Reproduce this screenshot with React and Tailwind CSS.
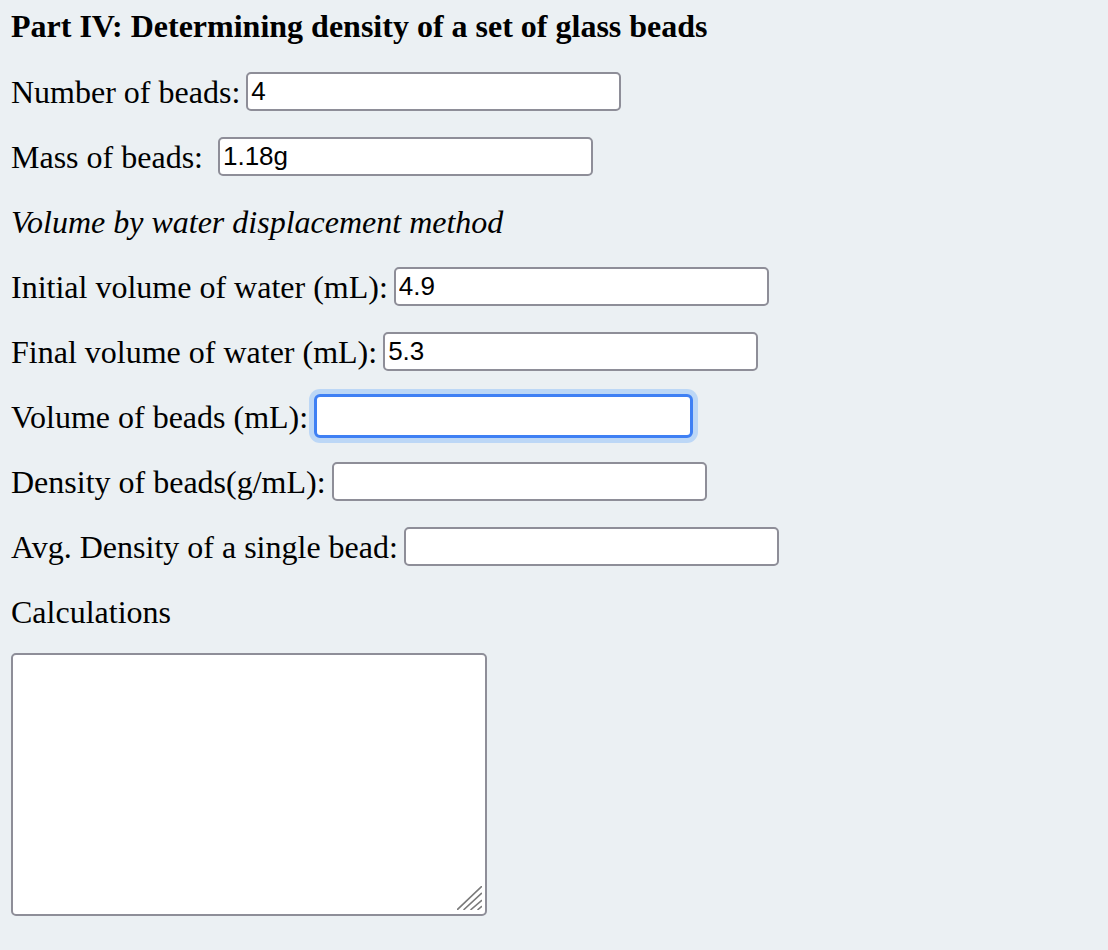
import React from "react";

function Field({ label, value, gap = "ml-[6px]" }) {
  return (
    <div className="h-[39px] mt-[26px] flex items-center">
      <span className="whitespace-pre pt-[1px]">{label}</span>
      <input
        readOnly
        defaultValue={value}
        className={`${gap} w-[375px] h-[39px] border-2 border-[#8e8e98] rounded-[5px] bg-white px-[3px] text-[26px] text-black font-['Liberation_Sans',Arial,sans-serif] outline-none`}
      />
    </div>
  );
}

export default function App() {
  return (
    <div className="min-h-[950px] bg-[#ebf0f3] pl-[11px] pt-[7px] font-['Liberation_Serif','Times_New_Roman',serif] text-[32px] leading-[37px] text-black">
      <div className="h-[39px] flex items-center font-bold">
        Part IV: Determining density of a set of glass beads
      </div>
      <Field label="Number of beads:" value="4" />
      <Field label="Mass of beads:" value="1.18g" gap="ml-[15px]" />
      <div className="h-[39px] mt-[26px] flex items-center italic">
        <span className="pt-[1px]">Volume by water displacement method</span>
      </div>
      <Field label="Initial volume of water (mL):" value="4.9" />
      <Field label="Final volume of water (mL):" value="5.3" />
      <div className="h-[39px] mt-[26px] flex items-center">
        <span className="pt-[1px]">Volume of beads (mL):</span>
        <input
          readOnly
          className="ml-[6px] -mt-[2px] w-[379px] h-[44px] border-[3.5px] border-[#3f80f4] rounded-[6px] bg-white px-[3px] text-[26px] font-['Liberation_Sans',Arial,sans-serif] outline-none shadow-[0_0_0_5px_#bcd7f6]"
        />
      </div>
      <Field label="Density of beads(g/mL):" value="" />
      <Field label="Avg. Density of a single bead:" value="" />
      <div className="h-[39px] mt-[26px] flex items-center">
        <span className="pt-[1px]">Calculations</span>
      </div>
      <div className="relative w-fit mt-[22px]">
        <textarea
          readOnly
          className="block w-[476px] h-[263px] border-2 border-[#8e8e98] rounded-[5px] bg-white resize-none outline-none"
        />
        <svg
          className="absolute right-[5px] bottom-[6px]"
          width="25"
          height="24"
          viewBox="0 0 25 24"
          fill="none"
          stroke="#7a7a7a"
          strokeWidth="1.6"
          strokeLinecap="round"
        >
          <line x1="0.5" y1="23.5" x2="24.5" y2="0.7" />
          <line x1="7" y1="23.5" x2="24.5" y2="7.3" />
          <line x1="14" y1="23.5" x2="24.5" y2="14.5" />
          <line x1="21" y1="23.5" x2="24.5" y2="20.5" />
        </svg>
      </div>
    </div>
  );
}
